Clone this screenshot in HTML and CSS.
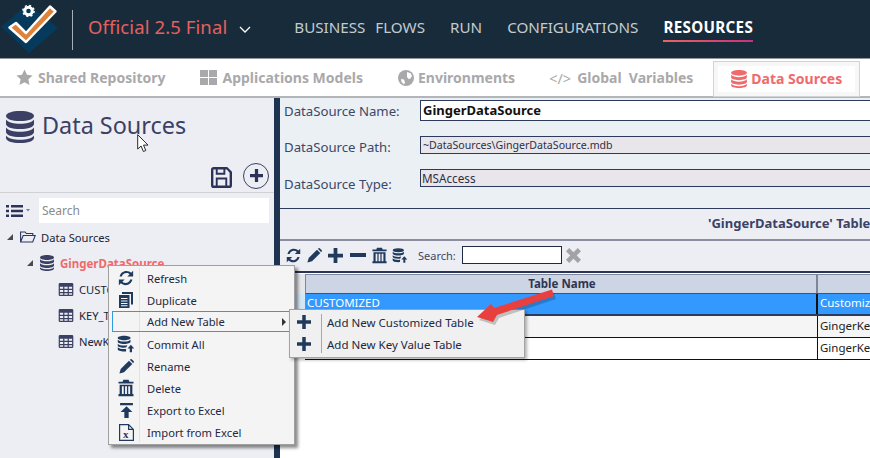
FILE: index.html
```html
<!DOCTYPE html>
<html lang="en">
<head>
<meta charset="utf-8">
<title>Ginger Data Sources</title>
<link rel="stylesheet" href="styles.css">
</head>
<body>
<svg class="defs" width="0" height="0" aria-hidden="true">
  <defs>
    <symbol id="db" viewBox="0 0 28 32">
      <path d="M14 0C6 0 0 2 0 5s6 5 14 5 14-2 14-5-6-5-14-5z"/>
      <path d="M0 8.500V13c0 3 6 5 14 5s14-2 14-5V8.500c-2 3-8 4.200-14 4.200S2 11.500 0 8.500z"/>
      <path d="M0 16.500V21c0 3 6 5 14 5s14-2 14-5v-4.500c-2 3-8 4.200-14 4.200S2 19.500 0 16.500z"/>
      <path d="M0 24.500V27c0 3 6 5 14 5s14-2 14-5v-2.500c-2 3-8 4.200-14 4.200S2 27.500 0 24.500z"/>
    </symbol>
    <symbol id="refresh" viewBox="0 0 24 24">
      <path d="M3.500 10C4.500 5.500 8 2.500 12.500 2.500c2.600 0 4.700 1 6.300 2.500L21.500 2.300V10h-7.700l3-3c-1.100-1-2.600-1.600-4.200-1.600-3 0-5.400 1.900-6.100 4.600z"/>
      <path d="M20.500 14c-1 4.500-4.500 7.500-9 7.500-2.600 0-4.700-1-6.300-2.500l-2.700 2.700V14h7.700l-3 3c1.100 1 2.600 1.600 4.200 1.600 3 0 5.400-1.900 6.100-4.600z"/>
    </symbol>
    <symbol id="pencil" viewBox="0 0 24 24">
      <path d="M2 22l1.800-6.500L15.500 3.800l4.700 4.700L8.500 20.200z"/>
      <path d="M17 2.300c1-1 2.200-1 3 0l1.700 1.700c1 .8 1 2 0 3L21.400 7.300l-4.700-4.700z"/>
    </symbol>
    <symbol id="trash" viewBox="0 0 24 24">
      <path d="M8.500 1h7l1 2.500H22V6H2V3.500h5.500z"/>
      <path fill-rule="evenodd" d="M3.500 7.500h17V20H22v3H2v-3h1.500zM6.500 9.500V20h2.500V9.500zM10.750 9.500V20h2.500V9.500zM15 9.500V20h2.500V9.500z"/>
    </symbol>
    <symbol id="plus" viewBox="0 0 16 16">
      <path d="M6 0h4v6h6v4h-6v6H6v-6H0V6h6z"/>
    </symbol>
    <symbol id="dbup" viewBox="0 0 24 24">
      <path d="M9.500 1C4.500 1 1 2.300 1 4s3.500 3 8.500 3S18 5.700 18 4s-3.500-3-8.500-3z"/>
      <path d="M1 6.200V9c0 1.700 3.500 3 8.500 3S18 10.700 18 9V6.200C16.500 8 13 8.600 9.500 8.600S2.500 8 1 6.200z"/>
      <path d="M1 11.200V14c0 1.700 3.500 3 8.500 3 1 0 2-.05 2.800-.2l1.500-3.300c-1.300.4-2.800.6-4.300.6-3.500 0-7-.6-8.500-2.500z"/>
      <path d="M1 16.200V19c0 1.700 3.500 3 8.500 3 .9 0 1.800-.05 2.600-.15v-3.300c-.8.1-1.700.15-2.600.15-3.500 0-7-.6-8.500-2.450z"/>
      <path d="M18.500 13l4.500 5h-3v5h-3v-5h-3z"/>
    </symbol>
    <symbol id="grid" viewBox="0 0 18 16">
      <path fill-rule="evenodd" d="M1.500 0h15A1.500 1.500 0 0 1 18 1.500v13a1.500 1.500 0 0 1-1.500 1.500h-15A1.500 1.500 0 0 1 0 14.500v-13A1.500 1.500 0 0 1 1.500 0zM1.500 4.500V7h4V4.500zM7 4.500V7h4V4.500zM12.500 4.500V7h4V4.500zM1.500 8.500V11h4V8.500zM7 8.500V11h4V8.500zM12.500 8.500V11h4V8.500zM1.500 12.500v2h4v-2zM7 12.500v2h4v-2zM12.500 12.500v2h4v-2z"/>
    </symbol>
  </defs>
</svg>

<header class="topbar">
  <svg class="logo" viewBox="0 0 60 54" width="60" height="54" aria-hidden="true">
    <path d="M28 4L58 28 29 53 1 27z" fill="#063a5c"/>
    <path d="M16 23l10 10L50 6.500l5.500 5L26 42 9.500 27.500z" fill="#e08238" stroke="#fff" stroke-width="2.500" stroke-linejoin="round"/>
    <circle cx="28.500" cy="11" r="3.800" fill="none" stroke="#fff" stroke-width="3"/>
    <circle cx="28.500" cy="11" r="5.600" fill="none" stroke="#fff" stroke-width="1.500" stroke-dasharray="2 2.400"/>
  </svg>
  <span class="topbar-rule"></span>
  <span class="solution">Official 2.5 Final</span>
  <svg class="chev" viewBox="0 0 12 7" width="12" height="7" aria-hidden="true"><path d="M1 1l5 5 5-5" fill="none" stroke="#fff" stroke-width="1.300"/></svg>
  <nav class="topnav">
    <a class="topnav-item">BUSINESS FLOWS</a>
    <a class="topnav-item">RUN</a>
    <a class="topnav-item">CONFIGURATIONS</a>
    <a class="topnav-item is-active">RESOURCES</a>
  </nav>
</header>

<div class="tabs">
  <a class="tab tab-repo">
    <svg class="tab-ico" viewBox="0 0 18 18" width="17" height="17" aria-hidden="true"><path d="M9 .5l2.600 5.600 6 .7-4.500 4.100 1.200 6L9 14l-5.300 2.900 1.200-6L.4 6.800l6-.7z"/></svg>
    <span>Shared Repository</span>
  </a>
  <a class="tab tab-apps">
    <svg class="tab-ico" viewBox="0 0 17 15" width="17" height="15" aria-hidden="true"><path d="M0 0h8v7H0zM9 0h8v7H9zM0 8h8v7H0zM9 8h8v7H9z"/></svg>
    <span>Applications Models</span>
  </a>
  <a class="tab tab-env">
    <svg class="tab-ico" viewBox="0 0 16 16" width="16" height="16" aria-hidden="true"><circle cx="8" cy="8" r="8"/><path d="M9 2l3.500 1.200L14 6l-1.500 2.500-2 .5-1.500-2zM3 9l3 .5 1 3-1 2L3.500 12z" fill="#fff"/></svg>
    <span>Environments</span>
  </a>
  <a class="tab tab-vars"><span class="code-ico">&lt;/&gt;</span><span>Global&nbsp; Variables</span></a>
  <a class="tab tab-ds is-active">
    <svg class="tab-ico" width="16" height="18" aria-hidden="true"><use href="#db"/></svg>
    <span>Data Sources</span>
  </a>
</div>

<div class="workspace">
  <aside class="sidebar">
    <div class="side-title">
      <svg class="side-db" width="28" height="32" aria-hidden="true"><use href="#db"/></svg>
      <h1>Data Sources</h1>
    </div>
    <div class="side-actions">
      <svg viewBox="0 0 22 22" width="21" height="21" aria-hidden="true"><path fill-rule="evenodd" d="M3 0h14l5 5v14a3 3 0 0 1-3 3H3a3 3 0 0 1-3-3V3a3 3 0 0 1 3-3zM2.500 2.500v17h2.500V11h12v8.500h2.500V6l-3-3.500H15V8H5V2.500zM7 2.500V6h6V2.500zM7 13v6.500h8V13z"/></svg>
      <span class="round-add"><svg width="13" height="13" aria-hidden="true"><use href="#plus"/></svg></span>
    </div>
    <div class="side-search">
      <svg class="list-ico" viewBox="0 0 24 12" width="24" height="12" aria-hidden="true"><path d="M0 0h3v2.500H0zM5 0h12v2.500H5zM0 4.700h3v2.500H0zM5 4.700h12v2.500H5zM0 9.400h3v2.500H0zM5 9.400h12v2.500H5z"/><path d="M20 4h4l-2 2.500z" fill="#5d82ad"/></svg>
      <div class="search-box">Search</div>
    </div>
    <ul class="tree">
      <li class="tree-row">
        <span class="tree-arrow"></span>
        <svg class="folder" viewBox="0 0 16 12" width="16" height="12" aria-hidden="true"><path d="M.6 11V1h4.500l1.200 1.500h6.500V4.500M.6 11l2.600-6.500h12l-2.500 6.500z"/></svg>
        <span>Data Sources</span>
      </li>
      <li class="tree-row tree-l1">
        <span class="tree-arrow"></span>
        <svg class="tree-db" width="14" height="16" aria-hidden="true"><use href="#db"/></svg>
        <span class="tree-sel">GingerDataSource</span>
      </li>
      <li class="tree-row tree-l2"><svg class="tree-grid" width="16" height="13" aria-hidden="true"><use href="#grid"/></svg><span>CUSTOMIZED</span></li>
      <li class="tree-row tree-l2"><svg class="tree-grid" width="16" height="13" aria-hidden="true"><use href="#grid"/></svg><span>KEY_TABLE</span></li>
      <li class="tree-row tree-l2"><svg class="tree-grid" width="16" height="13" aria-hidden="true"><use href="#grid"/></svg><span>NewKeyValue</span></li>
    </ul>
  </aside>

  <main class="content">
    <section class="details">
      <div class="field field-name"><label>DataSource Name:</label><div class="value value-name">GingerDataSource</div></div>
      <div class="field field-path"><label>DataSource Path:</label><div class="value value-path">~DataSources\GingerDataSource.mdb</div></div>
      <div class="field field-type"><label>DataSource Type:</label><div class="value">MSAccess</div></div>
    </section>
    <div class="section-head">'GingerDataSource' Table</div>
    <div class="toolbar">
      <svg width="17" height="17" aria-hidden="true"><use href="#refresh"/></svg>
      <svg class="tb-pencil" width="17" height="17" aria-hidden="true"><use href="#pencil"/></svg>
      <svg class="tb-plus" width="15" height="15" aria-hidden="true"><use href="#plus"/></svg>
      <span class="tb-minus"></span>
      <svg class="tb-trash" width="17" height="17" aria-hidden="true"><use href="#trash"/></svg>
      <svg class="tb-dbup" width="16" height="17" aria-hidden="true"><use href="#dbup"/></svg>
      <span class="tb-label">Search:</span>
      <div class="tb-input"></div>
      <svg class="tb-x" viewBox="0 0 14 14" width="15" height="15" aria-hidden="true"><path d="M3 0l4 4 4-4 3 3-4 4 4 4-3 3-4-4-4 4-3-3 4-4-4-4z"/></svg>
    </div>
    <div class="table-wrap">
      <div class="gutter">
        <div class="gutter-left"></div>
        <div class="gutter-head"><span class="corner"></span><span class="g-blue"></span></div>
      </div>
      <div class="table">
        <div class="t-row t-head"><div class="c1">Table Name</div><div class="c2"></div></div>
        <div class="t-row t-sel"><div class="c1">CUSTOMIZED</div><div class="c2">Customized</div></div>
        <div class="t-row t-alt"><div class="c1"></div><div class="c2">GingerKeyValue</div></div>
        <div class="t-row"><div class="c1"></div><div class="c2">GingerKeyValue</div></div>
      </div>
    </div>
  </main>
</div>

<div class="menu">
  <div class="menu-item"><span class="mi"><svg width="18" height="18" aria-hidden="true"><use href="#refresh"/></svg></span><span>Refresh</span></div>
  <div class="menu-item"><span class="mi"><svg viewBox="0 0 14 16" width="14" height="16" aria-hidden="true"><path d="M3 0h11v12.500h-2V2H3z"/><path fill-rule="evenodd" d="M0 3h10.500v13H0zM2 6v1h6.500V6zM2 8.500v1h6.500v-1zM2 11v1h6.500v-1zM2 13.300v1h6.500v-1z"/></svg></span><span>Duplicate</span></div>
  <div class="menu-item is-open"><span class="mi"></span><span>Add New Table</span><span class="caret"></span></div>
  <div class="menu-item"><span class="mi"><svg width="18" height="18" aria-hidden="true"><use href="#dbup"/></svg></span><span>Commit All</span></div>
  <div class="menu-item"><span class="mi"><svg width="17" height="17" aria-hidden="true"><use href="#pencil"/></svg></span><span>Rename</span></div>
  <div class="menu-item"><span class="mi"><svg width="18" height="18" aria-hidden="true"><use href="#trash"/></svg></span><span>Delete</span></div>
  <div class="menu-item"><span class="mi"><svg viewBox="0 0 12 14" width="13" height="15" aria-hidden="true"><path d="M0 0h12v2H0zM6 3l5.500 5.500H8V14H4V8.500H.5z"/></svg></span><span>Export to Excel</span></div>
  <div class="menu-item"><span class="mi"><svg viewBox="0 0 15 17" width="15" height="17" aria-hidden="true"><path d="M.6.600h9l4.800 4.800v11H.6zM9.600.600v4.800h4.800" fill="none" stroke="#1f3a5c" stroke-width="1.200"/><text x="4" y="14" class="x-glyph">x</text></svg></span><span>Import from Excel</span></div>
</div>

<div class="submenu">
  <div class="sub-item"><span class="si"><svg width="14" height="14" aria-hidden="true"><use href="#plus"/></svg></span><span>Add New Customized Table</span></div>
  <div class="sub-item"><span class="si"><svg width="14" height="14" aria-hidden="true"><use href="#plus"/></svg></span><span>Add New Key Value Table</span></div>
</div>

<svg class="annot-arrow" viewBox="0 0 90 42" width="90" height="42" aria-hidden="true">
  <path d="M82 4.500l2 6.500-57 19-4 7-16-5 14-13 3 4z" transform="translate(2 3)" fill="#000" opacity=".2"/>
  <path d="M82 4.500l2 6.500-57 19-4 7-16-5 14-13 3 4z" fill="#e8403f"/>
</svg>

<svg class="cursor" viewBox="0 0 12 19" width="12" height="19" aria-hidden="true">
  <path d="M.7.700v14.300l3.400-3 2.300 5.500 2.400-1-2.300-5.400h4.500z" fill="#fff" stroke="#2a2a2a" stroke-width="1"/>
</svg>
</body>
</html>
```
FILE: styles.css
```css
* { box-sizing: border-box; }
html, body { margin: 0; padding: 0; }
body {
  width: 870px;
  height: 458px;
  overflow: hidden;
  position: relative;
  font-family: "Noto Sans", "Open Sans", "Liberation Sans", sans-serif;
  font-size: 12px;
  color: #1c2740;
  background: #fff;
}
.defs { position: absolute; }
svg { display: block; flex: none; fill: currentColor; }

/* top bar */
.topbar {
  height: 59px;
  background: #182b3a;
  border-bottom: 1px solid #8f979d;
  display: flex;
  align-items: center;
  color: #fff;
}
.logo { margin: -5px 0 0 0; }
.topbar-rule { width: 1px; height: 40px; background: #a9b0b5; margin: 2px 0 0 12px; }
.solution { margin: -5px 0 0 15px; font-size: 18.5px; color: #e5605f; letter-spacing: .1px; }
.chev { margin: 0 0 0 12px; }
.topnav { display: flex; margin-left: 43px; gap: 25px; height: 100%; align-items: center; }
.topnav-item { position: relative; font-size: 15.2px; color: #c4cbd0; margin-bottom: 4px; word-spacing: 6px; white-space: nowrap; }
.topnav-item.is-active { color: #fff; font-weight: 700; letter-spacing: .3px; }
.topnav-item.is-active::after {
  content: "";
  position: absolute;
  left: 0; right: 0; bottom: -5px;
  height: 2px;
  background: linear-gradient(90deg, #e5665f, #c9307e);
}

/* tabs */
.tabs {
  height: 39px;
  background: #fff;
  border-bottom: 2px solid #b4b5b8;
  display: flex;
  align-items: center;
  font-weight: 700;
  font-size: 14px;
  color: #a9a9ab;
  white-space: nowrap;
}
.tab { display: flex; align-items: center; gap: 5px; }
.tab-ico { fill: #a9a9ab; }
.tab-repo { margin-left: 16px; }
.tab-apps { margin-left: 35px; }
.tab-env { margin-left: 35px; gap: 4px; }
.tab-vars { margin-left: 34px; gap: 6px; }
.code-ico { font-weight: 400; font-size: 14.5px; }
.tab-ds {
  margin-left: 20px;
  width: 147px;
  height: 36px;
  margin-top: 2px;
  justify-content: center;
  gap: 4px;
  background: #fff;
  border: 1px solid #d2d3d5;
  box-shadow: inset 0 0 0 4px #f7f7f8;
  color: #f0696b;
}
.tab-ds svg { color: #f0696b; fill: #f0696b; }

/* workspace */
.workspace { display: flex; height: 360px; }
.sidebar { width: 274px; background: #eceef4; color: #3a3f63; flex: none; }
.side-title { display: flex; gap: 8px; padding: 11px 0 0 6px; height: 64px; align-items: flex-start; }
.side-db { color: #3c4064; margin-top: 2px; }
.side-title h1 { margin: -3px 0 0; font-weight: 400; font-size: 23.4px; line-height: 38px; color: #3c4064; }
.side-actions {
  display: flex; justify-content: flex-end; align-items: center; gap: 11px;
  height: 31px;
  padding-right: 5px;
  border-bottom: 1px solid #d0d1d4;
  color: #2d3358;
}
.round-add {
  width: 26px; height: 26px; margin-top: -3px;
  border: 1.5px solid #3c4064; border-radius: 50%;
  display: flex; align-items: center; justify-content: center;
}
.side-search { display: flex; align-items: center; padding: 5px 5px 0 6px; gap: 9px; color: #2d3358; }
.search-box { flex: none; width: 230px; height: 25px; background: #fff; color: #8a8a8a; font-size: 12px; line-height: 25px; padding-left: 3px; margin-left: auto; }
.tree { list-style: none; margin: 0; padding: 1px 0 0; color: #1d2433; font-size: 11.2px; }
.tree-row { display: flex; align-items: center; height: 26px; padding-left: 7px; gap: 6px; white-space: nowrap; }
.tree-arrow { width: 0; height: 0; border-style: solid; border-width: 0 0 6px 6px; border-color: transparent transparent #4a4a4a transparent; margin-right: 1px; }
.folder { fill: none; stroke: #2a3560; stroke-width: 1.1; margin-right: -1px; }
.tree-l1 { padding-left: 27px; }
.tree-db { color: #3c4064; }
.tree-sel { color: #f0696b; font-weight: 700; font-size: 11.5px; }
.tree-l2 { padding-left: 58px; gap: 5px; }
.tree-grid { color: #3c4064; }

/* content */
.content {
  flex: 1;
  min-width: 0;
  border-left: 6px solid #1e3350;
  display: flex;
  flex-direction: column;
  background: #fff;
  overflow: hidden;
}
.details {
  height: 111px;
  background: #ebf0f5;
  border-bottom: 1px solid #2d3a5c;
  padding: 2px 0 0 4px;
  color: #3d4766;
}
.field { display: flex; align-items: flex-start; }
.field label { width: 136px; flex: none; font-size: 13.2px; line-height: 18px; white-space: nowrap; }
.value {
  flex: 1;
  height: 18px;
  background: #e8e6ea;
  border: 1px solid #2d3a5c;
  border-right: 0;
  font-size: 11.7px;
  line-height: 16px;
  padding-left: 1px;
  color: #2a3048;
}
.value-path { font-size: 10.6px; padding-left: 2px; }
.value-name { height: 21px; background: #fff; font-size: 13px; font-weight: 700; line-height: 19px; color: #111; padding-left: 2px; }
.field-name label { line-height: 22px; }
.field-path { margin-top: 14px; }
.field-path label { padding-top: 2px; }
.field-type { margin-top: 13px; }
.field-type label { padding-top: 6px; }
.section-head {
  height: 32px;
  background: #edeef3;
  border-bottom: 2px solid #8d8fa0;
  padding-left: 428px;
  font-weight: 700;
  font-size: 13px;
  line-height: 29px;
  color: #3a4266;
  white-space: nowrap;
  overflow: hidden;
}
.toolbar {
  height: 32px;
  background: #edeef3;
  border-bottom: 2px solid #2a3358;
  display: flex;
  align-items: center;
  padding: 0 0 2px 5px;
  color: #1f3a5c;
}
.tb-pencil { margin-left: 4px; }
.tb-plus { margin-left: 5px; }
.tb-minus { width: 16px; height: 4px; background: #1f3a5c; margin-left: 7px; }
.tb-trash { margin-left: 5px; }
.tb-dbup { margin-left: 4px; }
.tb-label { margin-left: 10px; font-size: 11px; color: #3d4766; }
.tb-input { width: 100px; height: 18px; margin-left: 6px; background: #fff; border: 1px solid #1f2a44; }
.tb-x { fill: #a3a3a6; margin-left: 4px; }

.table-wrap { display: flex; margin-top: 1px; }
.gutter { width: 25px; flex: none; display: flex; }
.gutter-left { width: 16px; background: #efefef; height: 84px; }
.gutter-head { width: 9px; display: flex; flex-direction: column; }
.corner { height: 20px; background: #e4e6ea; }
.g-blue { height: 20px; background: #d4e7f5; }
.table { flex: 1; font-size: 11.5px; color: #222; }
.t-row { display: flex; height: 22px; border-bottom: 1px solid #111; }
.c1 { width: 513px; flex: none; padding-left: 2px; line-height: 19px; border-right: 1px solid #111; }
.c2 { flex: 1; padding-left: 2px; line-height: 19px; white-space: nowrap; overflow: hidden; }
.t-head {
  height: 20px;
  background: #cdd5e4;
  border-top: 1px solid #7e8798;
  border-left: 1px solid #7e8798;
  border-bottom: 1px solid #3f5575;
  font-weight: 700;
  color: #2f3550;
}
.t-head .c1 { text-align: center; border-right: 2px solid #7e8798; width: 512px; line-height: 17px; }
.t-sel { background: #3399ff; color: #fff; border-bottom: 2px solid #2a3d5c; }
.t-sel .c1 { line-height: 18px; border-right-width: 2px; }
.t-sel .c2 { line-height: 18px; }
.t-alt { background: #f5f5f5; }

/* context menu */
.menu {
  position: absolute;
  left: 108px; top: 265px;
  width: 187px; height: 180px;
  background: #f4f4f5;
  border: 1px solid #a0a0a0;
  padding: 1px 0 0 3px;
  box-shadow: 3px 3px 3px rgba(0,0,0,.45);
  font-size: 11.2px;
  color: #232840;
}
.menu::before { content: ""; position: absolute; left: 30px; top: 2px; bottom: 2px; width: 1px; background: #e2e2e4; }
.menu-item { display: flex; align-items: center; height: 22px; white-space: nowrap; position: relative; }
.mi { width: 28px; flex: none; display: flex; justify-content: center; color: #1f3a5c; margin-right: 7px; }
.is-open { border: 1px solid #2f9be0; border-right: 0; margin: 0 -1px 1px 0; height: 21px; }
.is-open .mi { width: 27px; }
.caret { position: absolute; right: 9px; top: 6px; width: 0; height: 0; border-style: solid; border-width: 4px 0 4px 4px; border-color: transparent transparent transparent #333; }
.x-glyph { font-family: "Liberation Serif", serif; font-size: 11px; font-weight: 700; fill: #1f3a5c; }

.submenu {
  position: absolute;
  left: 289px; top: 309px;
  width: 236px; height: 49px;
  background: #f0f0f1;
  border: 1px solid #a3a3a3;
  padding-top: 1px;
  box-shadow: 2px 2px 3px rgba(0,0,0,.3);
  font-size: 11.5px;
  color: #232840;
}
.submenu::before { content: ""; position: absolute; left: 31px; top: 4px; bottom: 4px; width: 1px; background: #a8a8a8; }
.sub-item { display: flex; align-items: center; height: 22px; white-space: nowrap; }
.si { width: 32px; flex: none; display: flex; justify-content: center; color: #1f3a5c; margin-right: 5px; padding-right: 4px; }

.annot-arrow { position: absolute; left: 470px; top: 285px; overflow: visible; }
.cursor { position: absolute; left: 137px; top: 134px; }
```
